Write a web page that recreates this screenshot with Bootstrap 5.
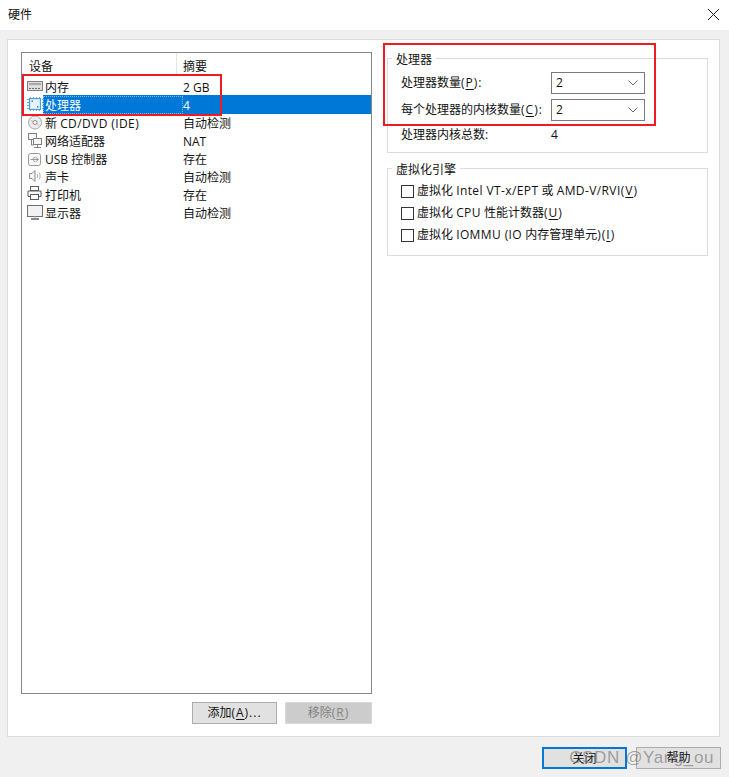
<!doctype html>
<html lang="zh">
<head>
<meta charset="utf-8">
<title>硬件</title>
<link href="https://cdn.jsdelivr.net/npm/bootstrap@5.3.0/dist/css/bootstrap.min.css" rel="stylesheet">
<style>
html,body{height:777px;overflow:hidden}
body{background:#f0f0f0;font:12px/18px "Open Sans","Noto Sans CJK SC",sans-serif;color:#111;width:729px;position:relative}
.titlebar{height:30px;background:#fff;padding:0 8px}
.titlebar span{line-height:28px}
.panel-main{height:698px;margin:9px 9px 0 7px;background:#fff;border:1px solid #dcdcdc;padding:12px 11px 12px 13px}
.leftcol{width:351px}
.rightcol{width:321px;margin-left:15px;padding-top:6px}
.listbox{height:642px;border:1px solid #828790;background:#fff}
.listhead{height:25px;padding-left:7px}
.listhead span{line-height:28px}
.headname{width:148px;border-right:1px solid #e5e5e5;height:22px}
.headval{padding-left:6px}
.devrow{height:18px;line-height:20px}
.devicon{width:21px;padding-left:5px;flex:none}
.devicon svg{display:block;width:16px;height:18px}
.devtext{width:140px;padding-left:2px;flex:none}
.devrow.sel .devtext,.devrow.sel .devval{background:#0078d7;color:#fff;box-shadow:0 -1px #0078d7}
.devrow.sel .devtext{outline:1px dotted #7fb8e8;outline-offset:-1px}
.devval{flex:1}
.winbtn{height:22px;width:85px;background:#e1e1e1;border:1px solid #adadad;border-radius:0;padding:0;font:inherit;color:#111;line-height:20px}
.winbtn:disabled{background:#ccc;border:1px solid #d9d9d9;color:#838383;opacity:1}
.btnrow{margin-top:8px;gap:8px}
.btnwide{width:87px}
.groupbox{border:1px solid #dcdcdc;position:relative;padding:0 13px}
.groupone{height:95px;padding-top:13px}
.grouptwo{height:88px;margin-top:15px;padding-top:11px}
.grouplabel{position:absolute;left:4px;top:-8px;background:#fff;padding:0 4px}
.fieldrow{height:22px;margin-bottom:5px}
.fieldlabel{width:150px;flex:none}
.form-select.winselect{width:94px;height:22px;min-height:0;border:1px solid #7a7a7a;border-radius:0;padding:0 0 0 4px;font:inherit;color:#111;background-image:url("data:image/svg+xml,%3csvg xmlns='http://www.w3.org/2000/svg' viewBox='0 0 10 6'%3e%3cpath fill='none' stroke='%23666' d='M.5.5 5 5 9.500.5'/%3e%3c/svg%3e");background-size:10px 6px;background-position:right 6px center;box-shadow:none}
.checkline{height:22px}
.form-check-input.wincheck{width:13px;height:13px;margin:0 3px 0 0;border:1px solid #333;border-radius:0;flex:none}
.footerbar{padding:10px 8px 0 0;gap:9px}
.btnfocus{border:2px solid #0078d7}
.btnfoot{width:85px}
.redbox{position:absolute;border:2px solid #ed1c24;pointer-events:none}
.redone{left:22px;top:74px;width:200px;height:42px}
.redtwo{left:383px;top:43px;width:273px;height:83px}
.watermark{position:absolute;right:15px;top:748px;font-size:17px;line-height:20px;color:rgba(110,110,110,.6);font-family:"Liberation Sans",sans-serif;white-space:nowrap;letter-spacing:.6px}
u{text-underline-offset:2px}
.lat{letter-spacing:.4px}
.mn{letter-spacing:1px}
.closex{width:13px;height:13px;margin:-1px 1px 0 0;flex:none}
</style>
</head>
<body>
<div class="titlebar d-flex align-items-center justify-content-between">
  <span>硬件</span>
  <svg class="closex" viewBox="0 0 13 13"><path d="M1 1l11 11M12 1L1 12" stroke="#222" stroke-width="1" fill="none"/></svg>
</div>
<div class="panel-main d-flex">
  <div class="leftcol d-flex flex-column">
    <div class="listbox">
      <div class="listhead d-flex"><span class="headname">设备</span><span class="headval">摘要</span></div>
      <div class="devrow d-flex"><div class="devicon"><svg viewBox="0 0 16 18"><rect x="0.500" y="3.500" width="15" height="9" fill="#dedede" stroke="#808080"/><rect x="2" y="5" width="12" height="2" fill="#a8a8a8"/><path d="M2 10.500h12" stroke="#707070" stroke-dasharray="2 1"/></svg></div><div class="devtext">内存</div><div class="devval">2 GB</div></div>
      <div class="devrow sel d-flex"><div class="devicon"><svg viewBox="0 0 16 18"><path d="M3.500 1v15M6.500 1v15M9.500 1v15M12.500 1v15M0 3.500h16M0 6.500h16M0 9.500h16M0 12.500h16" stroke="#62ade8" stroke-dasharray="2 1"/><rect x="2.500" y="2.500" width="11" height="11" fill="#cfe8fa" stroke="#4a9ee0"/><rect x="4" y="4" width="8" height="8" fill="#e4f3fd"/><rect x="4.500" y="4.500" width="1.500" height="1.500" fill="#3f83bb"/><rect x="10" y="10" width="1.500" height="1.500" fill="#3f83bb"/></svg></div><div class="devtext">处理器</div><div class="devval">4</div></div>
      <div class="devrow d-flex"><div class="devicon"><svg viewBox="0 0 16 18"><circle cx="8" cy="8.500" r="6.500" fill="#ececec" stroke="#a8a8a8"/><circle cx="8" cy="8.500" r="2" fill="#fff" stroke="#8a8a8a"/><path d="M4 6.500l2 1M10.500 10l1.500 1.500" stroke="#b5b5b5"/></svg></div><div class="devtext">新 <span class="lat">CD/DVD (IDE)</span></div><div class="devval">自动检测</div></div>
      <div class="devrow d-flex"><div class="devicon"><svg viewBox="0 0 16 18" fill="#f6f6f6" stroke="#808080"><rect x="1.500" y="1.500" width="8" height="6"/><rect x="6.500" y="6.500" width="8" height="6"/><path d="M4.500 8v5h2M10.500 13v2M7 15.500h7" fill="none"/></svg></div><div class="devtext">网络适配器</div><div class="devval">NAT</div></div>
      <div class="devrow d-flex"><div class="devicon"><svg viewBox="0 0 16 18" fill="none" stroke="#999"><rect x="1.500" y="3.500" width="12" height="12" rx="2" fill="#f8f8f8"/><path d="M3.500 9.500h8M9 7.500l2.500 2-2.500 2M5.500 9.500l1.500-2h1.500M6 9.500l1.500 2h1"/></svg></div><div class="devtext">USB 控制器</div><div class="devval">存在</div></div>
      <div class="devrow d-flex"><div class="devicon"><svg viewBox="0 0 16 18" fill="#f4f4f4" stroke="#8a8a8a"><path d="M2.500 5.500h2.500l3-3v11l-3-3h-2.500z"/><path d="M10 6c.8 1.300.8 2.700 0 4M12 4.500c1.500 2.300 1.500 4.700 0 7" fill="none" stroke="#aaa"/></svg></div><div class="devtext">声卡</div><div class="devval">自动检测</div></div>
      <div class="devrow d-flex"><div class="devicon"><svg viewBox="0 0 16 18" fill="#fafafa" stroke="#5c5c5c"><rect x="3.500" y="0.500" width="8" height="4"/><path d="M3.500 10.500h-2.500v-5.500h13v5.500h-2.500"/><rect x="3.500" y="8.500" width="8" height="5"/></svg></div><div class="devtext">打印机</div><div class="devval">存在</div></div>
      <div class="devrow d-flex"><div class="devicon"><svg viewBox="0 0 16 18"><rect x="0.500" y="1.500" width="15" height="11" fill="#f2f2f2" stroke="#6e6e6e"/><path d="M4 15h8" stroke="#8a8a8a" stroke-width="2"/><path d="M7 13h2" stroke="#aaa"/></svg></div><div class="devtext">显示器</div><div class="devval">自动检测</div></div>
    </div>
    <div class="btnrow d-flex justify-content-end">
      <button class="winbtn" type="button">添加<span class="mn">(<u>A</u>)...</span></button>
      <button class="winbtn btnwide" type="button" disabled>移除<span class="mn">(<u>R</u>)</span></button>
    </div>
  </div>
  <div class="rightcol">
    <div class="groupbox groupone">
      <div class="grouplabel">处理器</div>
      <div class="fieldrow d-flex align-items-center"><div class="fieldlabel">处理器数量<span class="mn">(<u>P</u>):</span></div><select class="form-select winselect"><option>2</option></select></div>
      <div class="fieldrow d-flex align-items-center"><div class="fieldlabel">每个处理器的内核数量<span class="mn">(<u>C</u>):</span></div><select class="form-select winselect"><option>2</option></select></div>
      <div class="d-flex align-items-center"><div class="fieldlabel">处理器内核总数:</div><div>4</div></div>
    </div>
    <div class="groupbox grouptwo">
      <div class="grouplabel">虚拟化引擎</div>
      <div class="checkline d-flex align-items-center"><input class="form-check-input wincheck" type="checkbox"><span>虚拟化 <span class="lat">Intel VT-x/EPT</span> 或 <span class="lat">AMD-V/RVI</span><span class="mn">(<u>V</u>)</span></span></div>
      <div class="checkline d-flex align-items-center"><input class="form-check-input wincheck" type="checkbox"><span>虚拟化 <span class="lat">CPU</span> 性能计数器<span class="mn">(<u>U</u>)</span></span></div>
      <div class="checkline d-flex align-items-center"><input class="form-check-input wincheck" type="checkbox"><span>虚拟化 <span class="lat">IOMMU (IO</span> 内存管理单元<span class="mn">)(<u>I</u>)</span></span></div>
    </div>
  </div>
</div>
<div class="footerbar d-flex justify-content-end">
  <button class="winbtn btnfocus btnfoot" type="button">关闭</button>
  <button class="winbtn btnfoot" type="button">帮助</button>
</div>
<div class="redbox redone"></div>
<div class="redbox redtwo"></div>
<div class="watermark">CSDN @Yang_ou</div>
</body>
</html>
